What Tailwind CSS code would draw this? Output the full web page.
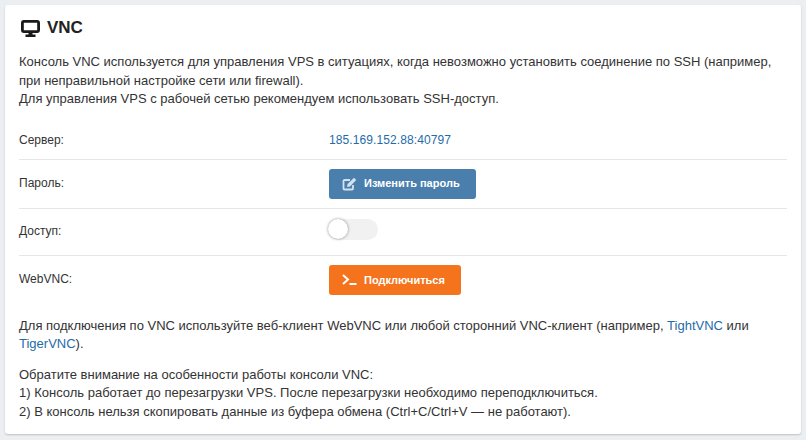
<!DOCTYPE html>
<html lang="ru">
  <head>
    <meta charset="UTF-8" />
    <meta name="viewport" content="width=device-width, initial-scale=1.0" />
    <script src="https://cdn.jsdelivr.net/npm/@tailwindcss/browser@4"></script>
    <title>VNC</title>
  </head>
  <body class="bg-[#eceff1] font-['Liberation_Sans',Arial,sans-serif] text-[12px] leading-[18.5px] text-[#333]">
    <div class="h-[440px] p-[5px] pb-[6px]">
      <div class="h-[429px] bg-white rounded-[3px] shadow-[0_1px_2px_rgba(0,0,0,0.2)] pt-[13px] px-[14px]">
        <h2 class="flex items-center gap-[7px] h-[20px] text-[17px] font-bold text-[#222]">
          <svg class="w-[19px] h-[17px] ml-[2px]" viewBox="0 0 19 17" fill="none">
            <rect x="1.400" y="1.400" width="16.200" height="10.200" rx="1.500" stroke="#1a1a1a" stroke-width="2.800" />
            <path d="M7.500 13h4v1.500h3V17h-10v-2.500h3z" fill="#1a1a1a" />
          </svg>
          VNC
        </h2>

        <p class="mt-[15px] text-[13px]">
          Консоль VNC используется для управления VPS в ситуациях, когда невозможно установить соединение по SSH (например,<br />
          при неправильной настройке сети или firewall).<br />
          Для управления VPS с рабочей сетью рекомендуем использовать SSH-доступ.
        </p>

        <div class="mt-[11px]">
          <div class="flex items-center h-[40px] pt-[2px] border-b border-[#e6e6e6]">
            <div class="w-[310px]">Сервер:</div>
            <a href="#" class="text-[#1f6ca8] tracking-[0.1px]">185.169.152.88:40797</a>
          </div>
          <div class="flex items-center h-[49px] border-b border-[#e6e6e6]">
            <div class="w-[310px]">Пароль:</div>
            <button class="flex items-center w-[147px] h-[30px] pl-[13px] gap-[7px] rounded-[3px] bg-[#4a7fad] text-white font-bold text-[11px]">
              <svg class="w-[15px] h-[14px]" viewBox="0 0 15 14" fill="none">
                <path d="M11 8v3.500a1 1 0 0 1-1 1H2.500a1 1 0 0 1-1-1V4a1 1 0 0 1 1-1H8" stroke="#d5e2ee" stroke-width="1.800" />
                <path d="M5 10l.6-3L12 .7 14.200 3 8 9.400z" fill="#d5e2ee" />
              </svg>
              Изменить пароль
            </button>
          </div>
          <div class="flex items-center h-[47px] border-b border-[#e6e6e6]">
            <div class="w-[309px]">Доступ:</div>
            <div class="relative w-[50px] h-[21px] mt-[-5px] rounded-full bg-[#f1f1f1]">
              <div class="absolute left-0 top-0 w-[20px] h-[20px] rounded-full bg-white shadow-[0_0_3px_rgba(0,0,0,0.45)]"></div>
            </div>
          </div>
          <div class="flex items-center h-[48px] pt-[1px]">
            <div class="w-[310px] mt-[-2px]">WebVNC:</div>
            <button class="flex items-center w-[132px] h-[30px] pl-[13px] gap-[7px] rounded-[3px] bg-[#f4731c] text-white font-bold text-[11px]">
              <svg class="w-[15px] h-[12px]" viewBox="0 0 15 12" fill="none">
                <path d="M1 1l5 4.500L1 10" stroke="#fff" stroke-width="2" />
                <path d="M7.500 10h7" stroke="#fff" stroke-width="2" />
              </svg>
              Подключиться
            </button>
          </div>
        </div>

        <p class="mt-[13px] text-[13px]">
          Для подключения по VNC используйте веб-клиент WebVNC или любой сторонний VNC-клиент (например,
          <a href="#" class="text-[#1f6ca8]">TightVNC</a> или<br />
          <a href="#" class="text-[#1f6ca8]">TigerVNC</a>).
        </p>
        <p class="mt-[12px] text-[13px]">
          Обратите внимание на особенности работы консоли VNC:<br />
          1) Консоль работает до перезагрузки VPS. После перезагрузки необходимо переподключиться.<br />
          2) В консоль нельзя скопировать данные из буфера обмена (Ctrl+C/Ctrl+V — не работают).
        </p>
      </div>
    </div>
  </body>
</html>
